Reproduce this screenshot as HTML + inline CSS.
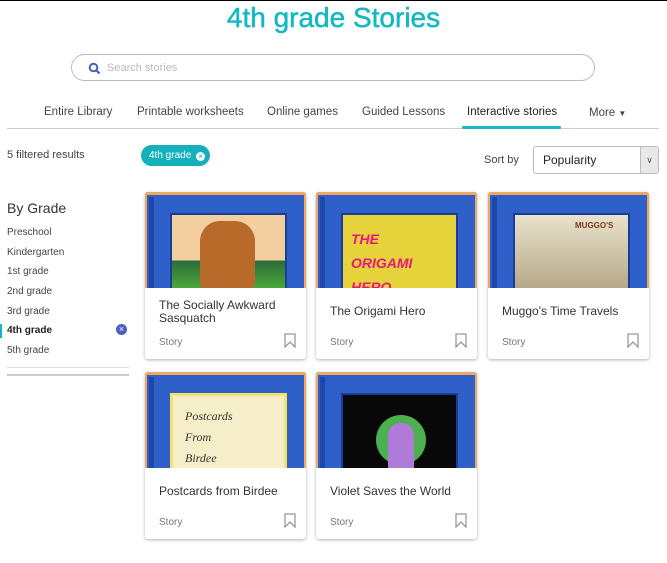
<!DOCTYPE html>
<html><head><meta charset="utf-8"><style>
*{margin:0;padding:0;box-sizing:border-box}
body{width:667px;height:563px;background:#fff;font-family:"Liberation Sans",sans-serif;position:relative;overflow:hidden;color:#333}
.abs{position:absolute}
h1{position:absolute;top:2px;left:0;width:667px;text-align:center;font-size:28px;font-weight:normal;color:#14b8c4;-webkit-text-stroke:0.5px #14b8c4}
.search{left:71px;top:54px;width:524px;height:27px;border:1px solid #bbb;border-radius:14px}
.nav{top:106px;font-size:11.5px;color:#444}
.card{position:absolute;width:161px;height:167px;background:#fff;border-radius:3px;box-shadow:0 1px 3px rgba(0,0,0,.3);overflow:hidden}
.img{position:absolute;left:0;top:0;width:161px;height:96px;background:#2f5fc9;border-top:3px solid #f0a860;border-left:2px solid #f0a860;border-right:2px solid #f0a860;overflow:hidden}
.spine{position:absolute;left:2px;top:2px;width:5px;height:94px;background:#1d47a8}
.pic{position:absolute;left:23px;top:18px;width:117px;height:78px;border:2px solid #183f96;border-bottom:none;overflow:hidden}
.t{position:absolute;left:14px;font-size:12px;color:#333;line-height:13px}
.s{position:absolute;left:14px;top:145px;font-size:10px;color:#777}
.bm{position:absolute;left:139px;top:141px}
.g{position:absolute;left:7px;font-size:10px;color:#444}
</style></head><body>
<div class="abs" style="left:0;top:0;width:667px;height:1px;background:#000"></div>
<h1>4th grade Stories</h1>
<div class="abs search"></div>
<svg class="abs" style="left:88px;top:62px" width="13" height="13" viewBox="0 0 13 13"><circle cx="5.5" cy="5.5" r="3.8" fill="none" stroke="#4a5fc1" stroke-width="2"/><path d="M8.3 8.3L11.5 11.5" stroke="#4a5fc1" stroke-width="2.2"/></svg>
<div class="abs" style="left:107px;top:62px;font-size:11px;color:#bbb">Search stories</div>
<div class="abs nav" style="left:44px">Entire Library</div>
<div class="abs nav" style="left:137px">Printable worksheets</div>
<div class="abs nav" style="left:267px">Online games</div>
<div class="abs nav" style="left:362px">Guided Lessons</div>
<div class="abs nav" style="left:467px;color:#222">Interactive stories</div>
<div class="abs nav" style="left:589px;top:107px">More <span style="font-size:8px">▼</span></div>
<div class="abs" style="left:7px;top:128px;width:652px;height:1px;background:#ccc"></div>
<div class="abs" style="left:462px;top:126px;width:99px;height:3px;border-radius:2px;background:#14b8c4"></div>
<div class="abs" style="left:7px;top:149px;font-size:11px;color:#444">5 filtered results</div>
<div class="abs" style="left:141px;top:145px;width:69px;height:21px;border-radius:11px;background:#14b1bc;color:#fff;font-size:10px;line-height:21px;padding-left:8px">4th grade <span style="display:inline-block;width:9px;height:9px;border-radius:50%;background:#fff;color:#14b1bc;font-size:8px;line-height:9px;text-align:center;vertical-align:-1px;margin-left:2px">×</span></div>
<div class="abs" style="left:484px;top:154px;font-size:11px;color:#444">Sort by</div>
<div class="abs" style="left:533px;top:146px;width:126px;height:28px;border:1px solid #bbb;border-radius:3px"></div>
<div class="abs" style="left:543px;top:153px;font-size:12px;color:#222">Popularity</div>
<div class="abs" style="left:640px;top:147px;width:18px;height:26px;background:#e8e8e8;border-left:1px solid #bbb;font-size:9px;text-align:center;line-height:26px;color:#555">∨</div>

<div class="abs" style="left:7px;top:200px;font-size:14px;color:#333">By Grade</div>
<div class="g" style="top:227px">Preschool</div>
<div class="g" style="top:247px">Kindergarten</div>
<div class="g" style="top:266px">1st grade</div>
<div class="g" style="top:286px">2nd grade</div>
<div class="g" style="top:306px">3rd grade</div>
<div class="g" style="top:325px;font-weight:bold;color:#222">4th grade</div>
<div class="abs" style="left:0;top:324px;width:2px;height:14px;background:#14b8c4"></div>
<div class="abs" style="left:116px;top:324px;width:11px;height:11px;border-radius:50%;background:#4a5fc1;color:#fff;font-size:9px;line-height:11px;text-align:center">×</div>
<div class="g" style="top:345px">5th grade</div>
<div class="abs" style="left:7px;top:367px;width:122px;height:1px;background:#ddd"></div>
<div class="abs" style="left:7px;top:374px;width:122px;height:2px;background:#ccc"></div>

<div class="card" style="left:145px;top:192px"><div class="img"><div class="spine"></div><div class="pic" style="background:linear-gradient(#f3cfa0 60%,#2d6a3a 60%,#4caf3a)"><div style="position:absolute;left:28px;top:6px;width:55px;height:68px;background:#b86a2a;border-radius:20px 20px 6px 6px"></div></div></div><div class="t" style="top:107px">The Socially Awkward<br>Sasquatch</div><div class="s">Story</div><svg class="bm" width="12" height="15"><path d="M1 1H11V14L6 9L1 14Z" fill="none" stroke="#999" stroke-width="1.3"/></svg></div>

<div class="card" style="left:316px;top:192px"><div class="img"><div class="spine"></div><div class="pic" style="background:#e6d23a"><div style="position:absolute;left:8px;top:12px;color:#e8187a;font-weight:bold;font-style:italic;font-size:14px;line-height:24px">THE<br>ORIGAMI<br>HERO</div></div></div><div class="t" style="top:113px">The Origami Hero</div><div class="s">Story</div><svg class="bm" width="12" height="15"><path d="M1 1H11V14L6 9L1 14Z" fill="none" stroke="#999" stroke-width="1.3"/></svg></div>

<div class="card" style="left:488px;top:192px"><div class="img"><div class="spine"></div><div class="pic" style="background:linear-gradient(#e8e2cc,#b5a585)"><div style="position:absolute;left:60px;top:6px;font-size:8px;color:#7a3a1a;font-weight:bold">MUGGO'S</div></div></div><div class="t" style="top:113px">Muggo's Time Travels</div><div class="s">Story</div><svg class="bm" width="12" height="15"><path d="M1 1H11V14L6 9L1 14Z" fill="none" stroke="#999" stroke-width="1.3"/></svg></div>

<div class="card" style="left:145px;top:372px"><div class="img"><div class="spine"></div><div class="pic" style="background:#f5eec8;border:3px solid #f3e36a;border-bottom:none"><div style="position:absolute;left:12px;top:10px;font-style:italic;font-family:'Liberation Serif',serif;font-size:12px;line-height:21px;color:#333">Postcards<br>From<br>Birdee</div></div></div><div class="t" style="top:113px">Postcards from Birdee</div><div class="s">Story</div><svg class="bm" width="12" height="15"><path d="M1 1H11V14L6 9L1 14Z" fill="none" stroke="#999" stroke-width="1.3"/></svg></div>

<div class="card" style="left:316px;top:372px"><div class="img"><div class="spine"></div><div class="pic" style="background:#080808"><div style="position:absolute;left:33px;top:20px;width:50px;height:50px;border-radius:50%;background:#4caf50"></div><div style="position:absolute;left:45px;top:28px;width:26px;height:50px;background:#b07ad8;border-radius:12px 12px 0 0"></div></div></div><div class="t" style="top:113px">Violet Saves the World</div><div class="s">Story</div><svg class="bm" width="12" height="15"><path d="M1 1H11V14L6 9L1 14Z" fill="none" stroke="#999" stroke-width="1.3"/></svg></div>
</body></html>
